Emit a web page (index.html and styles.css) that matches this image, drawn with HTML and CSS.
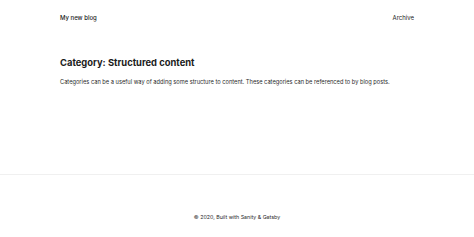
FILE: index.html
```html
<!DOCTYPE html>
<html lang="en">
<head>
    <meta charset="UTF-8">
    <meta name="viewport" content="width=device-width, initial-scale=1.0">
    <title>Category: Structured content</title>
    <link rel="stylesheet" href="styles.css">
</head>
<body>
    <div class="page">
        <header class="header">
            <a class="brand" href="#">My new blog</a>
            <nav class="nav">
                <a href="#">Archive</a>
            </nav>
        </header>

        <main class="main">
            <h1 class="title">Category: Structured content</h1>
            <p class="description">Categories can be a useful way of adding some structure to content. These categories can be referenced to by blog posts.</p>
        </main>

        <footer class="footer">
            <p>&copy; 2020, Built with Sanity &amp; Gatsby</p>
        </footer>
    </div>
</body>
</html>
```

FILE: styles.css
```css
*{
    box-sizing: border-box;
}
body{
    margin: 0;
    font-family: Inter, "Noto Sans", sans-serif;
    color: #1b1b1b;
    background-color: #fff;
}
a{
    color: inherit;
    text-decoration: none;
}
.page{
    height: 237px;
    display: flex;
    flex-direction: column;
}
.header{
    display: flex;
    justify-content: space-between;
    align-items: center;
    padding: 0 60px;
    height: 35px;
    font-size: 6px;
}
.brand{
    font-weight: 500;
}
.main{
    padding: 22px 60px 0;
    flex: 1;
}
.title{
    font-size: 9.4px;
    line-height: 1.2;
    font-weight: 700;
    margin: 0 0 10px;
}
.description{
    font-size: 5.7px;
    line-height: 1.5;
    margin: 0;
    color: #2b2b2b;
}
.footer{
    border-top: 1px solid #f0f0f0;
    height: 63px;
    padding-top: 39px;
    text-align: center;
    font-size: 5.3px;
    line-height: 1.5;
    color: #2b2b2b;
}
.footer p{
    margin: 0;
}
```
